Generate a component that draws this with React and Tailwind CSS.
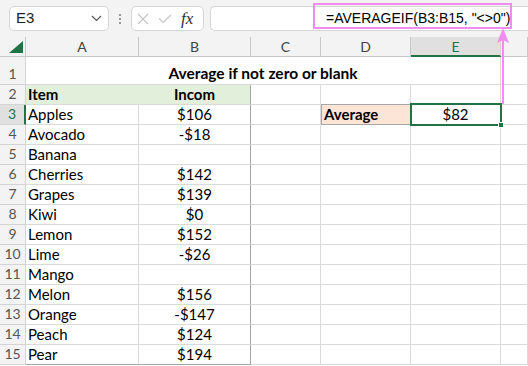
import React from 'react'

const rows = [
  ['Apples', '$106'],
  ['Avocado', '-$18'],
  ['Banana', ''],
  ['Cherries', '$142'],
  ['Grapes', '$139'],
  ['Kiwi', '$0'],
  ['Lemon', '$152'],
  ['Lime', '-$26'],
  ['Mango', ''],
  ['Melon', '$156'],
  ['Orange', '-$147'],
  ['Peach', '$124'],
  ['Pear', '$194'],
]

const cell = 'border-r border-b border-[#dadada] flex items-end pb-[1px] text-[15px] text-black leading-[18px] whitespace-nowrap'
const rowHead = 'border-r border-b border-[#d4d4d4] bg-[#f3f3f3] flex items-end justify-center pb-[1px] text-[14px] text-[#555] leading-[18px]'

export default function App() {
  return (
    <div className="relative w-[528px] h-[366px] overflow-hidden bg-white" style={{ fontFamily: 'Lato, "Open Sans", sans-serif' }}>
      {/* formula bar */}
      <div className="h-[37px] bg-[#f3f3f3] flex items-center gap-0 pl-[9px]" style={{ fontFamily: '"Liberation Sans", Arial, sans-serif' }}>
        <div className="w-[100px] h-[25px] bg-white border border-[#d6d6d6] rounded-[5px] flex items-center justify-between pl-[6px] pr-[6px] text-[15px] text-[#222]">
          <span>E3</span>
          <svg width="11" height="7" viewBox="0 0 11 7"><path d="M1 1l4.5 4.5L10 1" fill="none" stroke="#555" strokeWidth="1.2" /></svg>
        </div>
        <div className="w-[22px] flex flex-col items-center gap-[2px]">
          <span className="w-[2px] h-[2px] bg-[#999]" />
          <span className="w-[2px] h-[2px] bg-[#999]" />
          <span className="w-[2px] h-[2px] bg-[#999]" />
        </div>
        <div className="w-[73px] h-[25px] bg-white border border-[#d6d6d6] rounded-[5px] flex items-center pl-[5px] gap-[9px]">
          <svg width="12" height="12" viewBox="0 0 12 12"><path d="M1 1l10 10M11 1L1 11" stroke="#c4c4c4" strokeWidth="1.1" /></svg>
          <svg width="14" height="10" viewBox="0 0 14 10"><path d="M1 4.5l4 4L13 1" fill="none" stroke="#c4c4c4" strokeWidth="1.1" /></svg>
          <span className="text-[17px] italic text-[#333] leading-none" style={{ fontFamily: '"Liberation Serif", serif' }}>fx</span>
        </div>
        <div className="ml-[6px] flex-1 h-[25px] bg-white border border-[#d6d6d6] rounded-l-[5px] border-r-0 flex items-center pl-[115px] text-[14px] text-black">
          =AVERAGEIF(B3:B15, "&lt;&gt;0")
        </div>
      </div>

      {/* sheet */}
      <div className="grid grid-cols-[26px_113px_112px_70px_90px_90px_27px] grid-rows-[20px_28px_repeat(14,20px)]">
        <div className="border-r border-b border-[#c8c8c8] bg-[#f3f3f3] flex items-end justify-end pr-[2px] pb-[3px]">
          <svg width="14" height="12" viewBox="0 0 14 12"><path d="M14 0v12H0z" fill="#217346" /></svg>
        </div>
        {['A', 'B', 'C', 'D', 'E', 'F'].map(c => (
          <div key={c} className={`flex items-center justify-center text-[14px] border-r ${c === 'E' ? 'bg-[#e0e0e0] text-[#217346] border-b-2 border-b-[#217346] border-r-[#d4d4d4]' : 'bg-[#f3f3f3] text-[#444] border-b border-[#c8c8c8]'}`}>
            {c === 'F' ? '' : c}
          </div>
        ))}

        <div className={rowHead}>1</div>
        <div className="col-span-5 border-r border-b border-[#dadada] flex items-end justify-center pb-[2px] text-[15.5px] font-bold text-black leading-[18px]">
          Average if not zero or blank
        </div>
        <div className={cell} />

        <div className={rowHead}>2</div>
        <div className="bg-[#e2efda] border-b border-[#dadada] flex items-end pb-[1px] pl-[2px] text-[15px] font-bold leading-[18px]">Item</div>
        <div className="bg-[#e2efda] border-r border-r-[#a6a6a6] border-b border-[#dadada] flex items-end justify-center pb-[1px] text-[15px] font-bold leading-[18px]">Incom</div>
        <div className={cell} />
        <div className={cell} />
        <div className={cell} />
        <div className={cell} />

        {rows.map(([item, val], i) => {
          const n = i + 3
          const last = n === 15
          return (
            <React.Fragment key={n}>
              <div className={n === 3 ? 'bg-[#e0e0e0] border-r-2 border-r-[#217346] border-b border-[#d4d4d4] flex items-end justify-center pb-[1px] text-[14px] text-[#217346] leading-[18px]' : rowHead}>{n}</div>
              <div className={`${cell} pl-[2px] ${last ? 'border-b-[#a6a6a6]' : ''}`}>{item}</div>
              <div className={`${cell} justify-center border-r-[#a6a6a6] ${last ? 'border-b-[#a6a6a6]' : ''}`}>{val}</div>
              <div className={cell} />
              {n === 3 ? (
                <>
                  <div className="bg-[#fce4d6] border border-[#a6a6a6] -mt-[1px] flex items-end pb-[1px] pl-[2px] text-[15px] font-bold leading-[18px]">Average</div>
                  <div className={`${cell} relative justify-center`}>
                    $82
                    <div className="absolute -left-[1px] -top-[2px] w-[92px] h-[23px] border-2 border-[#217346]" />
                    <div className="absolute right-[-4px] bottom-[-4px] w-[6px] h-[6px] bg-[#217346] border border-white" />
                  </div>
                </>
              ) : (
                <>
                  <div className={cell} />
                  <div className={cell} />
                </>
              )}
              <div className={cell} />
            </React.Fragment>
          )
        })}
      </div>

      {/* callout */}
      <div className="absolute left-[313px] top-[3px] w-[199px] h-[26px] border-2 border-[#f08ef0]" />
      <svg className="absolute left-[495px] top-[27px]" width="16" height="80" viewBox="0 0 16 80">
        <rect x="7" y="8" width="2" height="69" fill="#f08ef0" />
        <path d="M8 1L14 16L8 13L2 16Z" fill="#f08ef0" />
      </svg>
    </div>
  )
}
